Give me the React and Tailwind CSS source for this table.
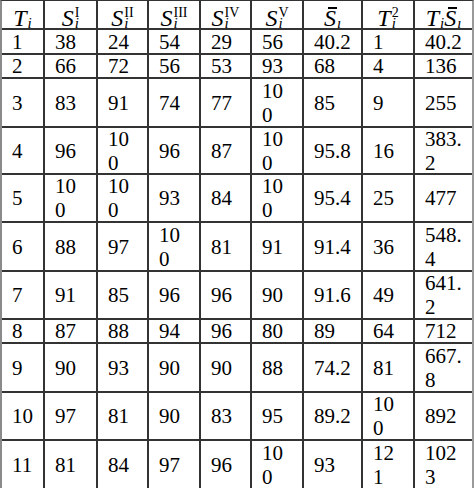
const rows = [
  ['1', '38', '24', '54', '29', '56', '40.2', '1', '40.2'],
  ['2', '66', '72', '56', '53', '93', '68', '4', '136'],
  ['3', '83', '91', '74', '77', '10\n0', '85', '9', '255'],
  ['4', '96', '10\n0', '96', '87', '10\n0', '95.8', '16', '383.\n2'],
  ['5', '10\n0', '10\n0', '93', '84', '10\n0', '95.4', '25', '477'],
  ['6', '88', '97', '10\n0', '81', '91', '91.4', '36', '548.\n4'],
  ['7', '91', '85', '96', '96', '90', '91.6', '49', '641.\n2'],
  ['8', '87', '88', '94', '96', '80', '89', '64', '712'],
  ['9', '90', '93', '90', '90', '88', '74.2', '81', '667.\n8'],
  ['10', '97', '81', '90', '83', '95', '89.2', '10\n0', '892'],
  ['11', '81', '84', '97', '96', '10\n0', '93', '12\n1', '102\n3'],
]

// base letter with a stacked superscript / subscript, like T_i^2
function Sym({ base, bar, sup, sub }) {
  return (
    <span className="inline-flex items-start">
      <span className="relative text-[24px] leading-[23px] italic">
        {bar && <span className="absolute left-[4px] right-[-1px] top-0 h-[1.5px] bg-black" />}
        {base}
      </span>
      <span className="mt-[1px] flex flex-col pl-[1px]">
        <span className="min-h-[10px] text-[14px] leading-[10px] not-italic">{sup}</span>
        <span className="text-[15px] leading-[10px] italic">{sub}</span>
      </span>
    </span>
  )
}

const header = [
  <Sym base="T" sub="i" />,
  <Sym base="S" sup="I" sub="i" />,
  <Sym base="S" sup="II" sub="i" />,
  <Sym base="S" sup="III" sub="i" />,
  <Sym base="S" sup="IV" sub="i" />,
  <Sym base="S" sup="V" sub="i" />,
  <Sym base="S" bar sub="ı" />,
  <Sym base="T" sup="2" sub="i" />,
  <span className="inline-flex">
    <Sym base="T" sub="i" />
    <Sym base="S" bar sub="ı" />
  </span>,
]

export default function App() {
  return (
    <div className="h-[488px] w-[474px] overflow-hidden bg-white [font-family:'Liberation_Serif',serif] text-black">
      <div className="border-t border-l-2 border-r-2 border-t-[#333] border-l-[#8a8a8a] border-r-[#9a9a9a]">
        <div className="grid grid-cols-[41px_51px_49px_50px_49px_50px_57px_50px_57px] grid-rows-[27px_23px_22px_47px_45px_46px_47px_46px_22px_47px_46px_47px] gap-[2px] bg-[#333]">
          {header.map((h, i) => (
            <div key={i} className="flex justify-center bg-white pt-[6px]">
              {h}
            </div>
          ))}
          {rows.map((r, ri) =>
            r.map((c, ci) => (
              <div
                key={`${ri}-${ci}`}
                className="flex items-center whitespace-pre-line bg-white pl-[10px] text-[21px] leading-[24px]"
              >
                {c}
              </div>
            ))
          )}
        </div>
      </div>
    </div>
  )
}
